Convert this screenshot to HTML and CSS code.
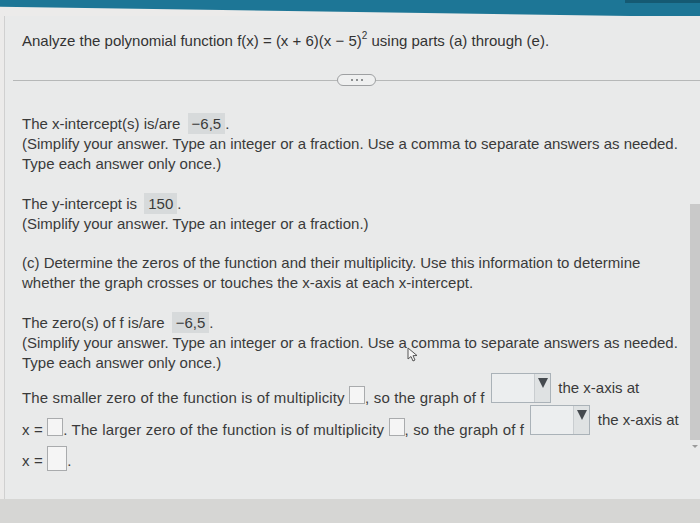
FILE: index.html
```html
<!DOCTYPE html>
<html>
<head>
<meta charset="utf-8">
<link rel="stylesheet" href="styles.css">
</head>
<body>
<div class="topbar"><span class="topdark"></span></div>
<div class="panel">
  <div class="title">Analyze the polynomial function f(x) = (x + 6)(x − 5)<sup>2</sup> using parts (a) through (e).</div>
  <div class="divider"><span class="line"></span><span class="pill"><i></i><i></i><i></i></span><span class="line"></span></div>
  <div class="content">
    <p class="block">The x-intercept(s) is/are <span class="ans">−6,5</span>.<br>(Simplify your answer. Type an integer or a fraction. Use a comma to separate answers as needed.<br>Type each answer only once.)</p>
    <p class="block">The y-intercept is <span class="ans">150</span>.<br>(Simplify your answer. Type an integer or a fraction.)</p>
    <p class="block">(c) Determine the zeros of the function and their multiplicity. Use this information to determine<br>whether the graph crosses or touches the x-axis at each x-intercept.</p>
    <p class="block last">The zero(s) of f is/are <span class="ans">−6,5</span>.<br>(Simplify your answer. Type an integer or a fraction. Use a comma to separate answers as needed.<br>Type each answer only once.)</p>
    <div class="mult">
      <div class="mline">The smaller zero of the function is of multiplicity <span class="box"></span>, so the graph of f <span class="dd"><span class="btn"><span class="tri"></span></span></span> <span class="after">the x-axis at</span></div>
      <div class="mline">x = <span class="box"></span>. The larger zero of the function is of multiplicity <span class="box"></span>, so the graph of f <span class="dd"><span class="btn"><span class="tri"></span></span></span> <span class="after">the x-axis at</span></div>
      <div class="mline l3">x = <span class="box big"></span>.</div>
    </div>
  </div>
  <div class="scroll"><span class="thumb"></span><span class="arrow"></span></div>
  <svg class="cursor" width="12" height="16" viewBox="0 0 12 16"><path d="M1 1 L1 12 L4 9.5 L6 14 L8 13 L6 8.7 L10 8.5 Z" fill="#f4f4f4" stroke="#555" stroke-width="1"/></svg>
</div>
<div class="bottom"></div>
</body>
</html>
```
FILE: styles.css
```css
html, body { margin: 0; padding: 0; }
body {
  width: 700px; height: 523px; overflow: hidden;
  background: #ecebea;
  font-family: "Liberation Sans", Arial, sans-serif;
  color: #3a3a3a;
}
.topbar {
  position: relative;
  height: 17px; background: #1d7696;
  clip-path: polygon(0 0, 100% 0, 100% 100%, 0 40%);
}
.topdark {
  position: absolute; right: 0; top: 0;
  width: 75px; height: 3px; background: #155a73;
}
.panel {
  position: relative;
  margin-top: -1px;
  margin-left: 4px;
  height: 483px;
  border-left: 1px solid #d0d0d0;
  background: #e9eaea;
}
.title {
  padding: 16px 0 0 17px;
  font-size: 15px;
  line-height: 18px;
  color: #333;
}
.title sup { font-size: 10px; line-height: 0; vertical-align: 7px; }
.divider {
  display: flex; align-items: center;
  margin-top: 24px; padding-left: 8px;
}
.divider .line { flex: 1; height: 1px; background: #b6b8b8; }
.pill {
  display: flex; align-items: center; justify-content: center; gap: 3px;
  width: 37px; height: 10px;
  border: 1px solid #9ea0a2; border-radius: 6px;
  background: #eff0f0;
}
.pill i { width: 2px; height: 2px; border-radius: 50%; background: #6d7072; }
.content { padding: 27px 0 0 17px; font-size: 15px; line-height: 20px; }
.block { margin: 0 0 19px 0; }
.block.last { margin-bottom: 0; }
.ans {
  display: inline-block; background: #d7dadb;
  padding: 0 4px; line-height: 21px; margin-left: 3px;
}
.mult { margin-top: 0; }
.mline { line-height: 15px; letter-spacing: 0.15px; }
.box {
  display: inline-block; width: 14px; height: 16px;
  border: 1px solid #a9abad; background: #f5f5f5;
  vertical-align: -1px;
}
.box.big { width: 18px; height: 23px; vertical-align: -5px; }
.l3 { margin-top: 9px; }
.dd {
  display: inline-block; position: relative;
  width: 58px; height: 28px;
  border: 1px solid #aab2b8; background: #eceeef;
  vertical-align: baseline;
  margin-left: 2px;
}
.btn {
  position: absolute; right: 0; top: 0; bottom: 0; width: 15px;
  background: #dfe2e3; border-left: 1px solid #c9cdd0;
}
.tri {
  position: absolute; left: 3px; top: 4px;
  width: 0; height: 0;
  border-left: 5px solid transparent; border-right: 5px solid transparent;
  border-top: 10px solid #454a4f;
}
.after { display: inline-block; vertical-align: top; line-height: 30px; margin-left: 3px; letter-spacing: 0; }
.scroll { position: absolute; right: 0; top: 188px; width: 10px; height: 250px; }
.thumb { display: block; height: 236px; background: #c9c9c9; }
.arrow { display: block; margin: 5px auto 0; width: 0; height: 0; border-left: 3px solid transparent; border-right: 3px solid transparent; border-top: 3px solid #9a9a9a; }
.cursor { position: absolute; left: 402px; top: 331px; }
.bottom { height: 25px; background: #d6d6d4; }
```
